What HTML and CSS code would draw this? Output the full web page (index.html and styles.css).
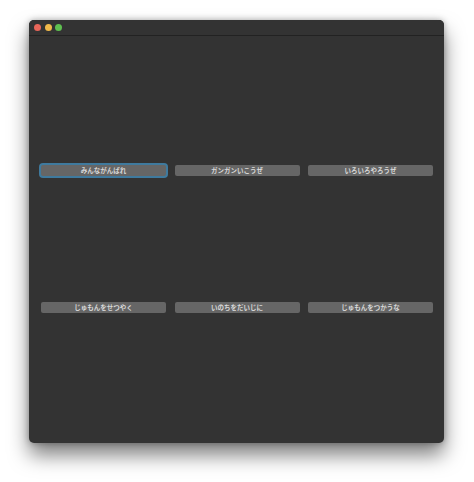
FILE: index.html
```html
<!DOCTYPE html>
<html lang="ja">
<head>
    <meta charset="UTF-8">
    <title>じゅもん</title>
    <link rel="stylesheet" href="styles.css">
</head>
<body>
    <div class="window">
        <div class="titlebar">
            <span class="light red"></span>
            <span class="light yellow"></span>
            <span class="light green"></span>
        </div>
        <div class="grid">
            <div class="btn focus">みんながんばれ</div>
            <div class="btn">ガンガンいこうぜ</div>
            <div class="btn">いろいろやろうぜ</div>
            <div class="btn">じゅもんをせつやく</div>
            <div class="btn">いのちをだいじに</div>
            <div class="btn">じゅもんをつかうな</div>
        </div>
    </div>
</body>
</html>
```

FILE: styles.css
```css
*{
    margin: 0;
    padding: 0;
    box-sizing: border-box;
}
body{
    width: 474px;
    height: 482px;
    background-color: #fff;
    padding: 20px 30px 39px 29px;
    overflow: hidden;
    font-family: "Noto Sans CJK JP", "Liberation Sans", sans-serif;
}
.window{
    height: 423px;
    display: flex;
    flex-direction: column;
    background-color: #333;
    border-radius: 5px;
    box-shadow: 0 12px 20px rgba(0,0,0,0.5), 0 0 6px rgba(0,0,0,0.3);
    overflow: hidden;
}
.titlebar{
    height: 16px;
    display: flex;
    align-items: center;
    gap: 3.7px;
    padding-left: 5px;
    background-color: #333;
    border-bottom: 1px solid #222;
}
.light{
    width: 7px;
    height: 7px;
    border-radius: 50%;
}
.red{
    background-color: #e8665a;
}
.yellow{
    background-color: #f0b94a;
}
.green{
    background-color: #5fc050;
}
.grid{
    flex: 1;
    display: grid;
    grid-template-columns: repeat(3, 125px);
    grid-template-rows: 11px 11px;
    justify-content: start;
    align-content: space-evenly;
    column-gap: 8.5px;
    padding: 2px 0 3px 12px;
}
.btn{
    height: 11px;
    background-color: #666;
    border-radius: 2px;
    color: #d8d8d8;
    font-size: 6.5px;
    font-weight: 700;
    line-height: 11px;
    text-align: center;
    white-space: nowrap;
}
.focus{
    box-shadow: 0 0 0 2px #3f7a9e;
}
```
